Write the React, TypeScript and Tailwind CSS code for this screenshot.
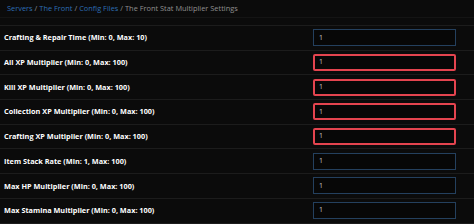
const ROWS: { label: string; value: string; error?: boolean }[] = [
  { label: 'Crafting & Repair Time (Min: 0, Max: 10)', value: '1' },
  { label: 'All XP Multiplier (Min: 0, Max: 100)', value: '1', error: true },
  { label: 'Kill XP Multiplier (Min: 0, Max: 100)', value: '1', error: true },
  { label: 'Collection XP Multiplier (Min: 0, Max: 100)', value: '1', error: true },
  { label: 'Crafting XP Multiplier (Min: 0, Max: 100)', value: '1', error: true },
  { label: 'Item Stack Rate (Min: 1, Max: 100)', value: '1' },
  { label: 'Max HP Multiplier (Min: 0, Max: 100)', value: '1' },
  { label: 'Max Stamina Multiplier (Min: 0, Max: 100)', value: '1' },
];

export default function App() {
  return (
    <div
      className="w-[474px] h-[224px] overflow-hidden bg-[#0b0b0b] text-white"
      style={{ fontFamily: '"Open Sans", "Liberation Sans", sans-serif' }}
    >
      {/* Breadcrumb */}
      <div className="h-[18px] px-[7px] flex items-center border-b border-[#141414] text-[7.4px] text-[#8f8f8f]">
        <span className="text-[#2d6db3]">Servers</span>
        <span className="mx-[2px]">/</span>
        <span className="text-[#2d6db3]">The Front</span>
        <span className="mx-[2px]">/</span>
        <span className="text-[#2d6db3]">Config Files</span>
        <span className="mx-[2px]">/</span>
        <span>The Front Stat Multiplier Settings</span>
      </div>
      <div className="h-[7px]" />

      {/* Settings rows */}
      <div className="border-t border-[#1c1c1c]">
        {ROWS.map((row) => (
          <div
            key={row.label}
            className="h-[24.7px] flex items-center border-b border-[#1c1c1c] pl-[4px]"
          >
            <span className="flex-1 text-[7.3px] font-bold">{row.label}</span>
            <div
              className={
                row.error
                  ? 'w-[143px] h-[17px] mr-[18px] rounded-[2px] border-2 border-[#e4444f] bg-[#070707] flex items-center pl-[4px]'
                  : 'w-[143px] h-[17px] mr-[18px] border border-[#24405e] bg-[#070707] flex items-center pl-[5px]'
              }
            >
              <span className="text-[7px] text-[#c8c8c8]">{row.value}</span>
            </div>
          </div>
        ))}
      </div>
    </div>
  );
}
